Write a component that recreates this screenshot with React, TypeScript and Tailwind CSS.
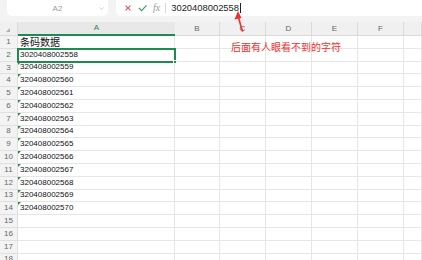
import { ChevronDown } from "lucide-react";

const cols = [
  { name: "A", w: "w-[157px]" },
  { name: "B", w: "w-[45px]" },
  { name: "C", w: "w-[46px]" },
  { name: "D", w: "w-[46px]" },
  { name: "E", w: "w-[46px]" },
  { name: "F", w: "w-[46px]" },
  { name: "", w: "flex-1" },
];

const values: Record<number, string> = { 1: "条码数据", 2: "3020408002558" };
for (let i = 3; i <= 14; i++) values[i] = String(320408002556 + i);

const rows = Array.from({ length: 18 }, (_, i) => i + 1);

export default function App() {
  return (
    <div
      className="relative w-[422px] h-[260px] overflow-hidden bg-white text-[#222]"
      style={{ fontFamily: '"Liberation Sans", "Noto Sans CJK SC", sans-serif' }}
    >
      {/* formula bar */}
      <div className="h-[22px] bg-[#f3f3f3] flex items-start">
        <div className="ml-[7px] w-[101px] h-[16px] bg-white rounded-b-[5px] flex items-center relative">
          <span className="flex-1 text-center text-[8px] text-[#9a9a9a] pt-[1px]">A2</span>
          <ChevronDown className="absolute right-[3px] top-[5px] w-[7px] h-[7px] text-[#b5b5b5]" strokeWidth={2} />
        </div>
        <div className="ml-[8px] flex-1 h-[16px] bg-white rounded-bl-[5px] flex items-center">
          <svg className="ml-[8px] w-[8px] h-[8px]" viewBox="0 0 10 10">
            <path d="M2 2 L8 8 M8 2 L2 8" stroke="#e0505a" strokeWidth="1.3" fill="none" />
          </svg>
          <svg className="ml-[6px] w-[9px] h-[8px]" viewBox="0 0 10 9">
            <path d="M1 4.5 L4 7.5 L9.5 1.5" stroke="#36a36a" strokeWidth="1.3" fill="none" />
          </svg>
          <span
            className="ml-[6px] text-[10px] italic text-[#9a9a9a] leading-none"
            style={{ fontFamily: '"Liberation Serif", serif' }}
          >
            fx
          </span>
          <div className="ml-[5px] w-px h-[10px] bg-[#d8d8d8]" />
          <span className="ml-[5px] text-[9.4px] text-[#222] leading-none">3020408002558</span>
          <div className="ml-[1px] w-px h-[10px] bg-[#222]" />
        </div>
      </div>

      {/* header row */}
      <div className="flex h-[14px]">
        <div className="w-[18px] bg-[#f0f0f0] border-r border-b border-[#dadada] relative">
          <div className="absolute left-[6px] top-[6px] w-0 h-0 border-l-[4px] border-l-transparent border-b-[4px] border-b-[#b0b0b0]" />
        </div>
        {cols.map((c, i) => (
          <div
            key={i}
            className={`${c.w} flex items-center justify-center text-[8px] ${
              i === 0
                ? "bg-[#e8e8e8] border-b-2 border-[#1d8a4e] text-[#1d8a4e]"
                : "bg-[#f0f0f0] border-b border-r border-[#dadada] text-[#666]"
            }`}
          >
            {c.name}
          </div>
        ))}
      </div>

      {/* grid rows */}
      {rows.map((r) => (
        <div key={r} className="flex h-[12.8px]">
          <div
            className={`w-[18px] bg-[#f3f3f3] border-r border-b border-[#e0e0e0] flex items-center justify-center text-[8px] ${
              r === 2 ? "text-[#1d8a4e]" : "text-[#666]"
            }`}
          >
            {r}
          </div>
          {cols.map((c, i) => (
            <div key={i} className={`${c.w} relative border-r border-b border-[#e6e6e6] flex items-center`}>
              {i === 0 && values[r] && (
                <span
                  className={`pl-[2px] leading-none ${r === 1 ? "text-[10px] text-[#111]" : "text-[8px] text-[#111]"}`}
                  style={r === 1 ? { fontFamily: '"Noto Sans CJK SC", sans-serif' } : undefined}
                >
                  {values[r]}
                </span>
              )}
              {i === 0 && r >= 3 && r <= 14 && (
                <div className="absolute left-0 top-0 w-0 h-0 border-t-[3px] border-t-[#1d8a4e] border-r-[3px] border-r-transparent" />
              )}
            </div>
          ))}
        </div>
      ))}

      {/* selection of A2 */}
      <div className="absolute left-[17px] top-[48px] w-[159px] h-[15px] border-2 border-[#1d8a4e]">
        <div className="absolute -right-[3px] -bottom-[3px] w-[4px] h-[4px] bg-[#1d8a4e] border border-white" />
      </div>

      {/* annotation */}
      <svg className="absolute left-[230px] top-[8px] w-[20px] h-[26px]" viewBox="0 0 20 26">
        <path d="M8 3 L4.5 11.5 L11.5 10 Z" fill="#f03030" />
        <path d="M8.5 9 Q10 16 12.5 23" stroke="#f03030" strokeWidth="1.6" fill="none" strokeLinecap="round" />
      </svg>
      <div
        className="absolute left-[231px] top-[42px] text-[10px] leading-none text-[#f23030]"
        style={{ fontFamily: '"Noto Sans CJK SC", sans-serif' }}
      >
        后面有人眼看不到的字符
      </div>
    </div>
  );
}
